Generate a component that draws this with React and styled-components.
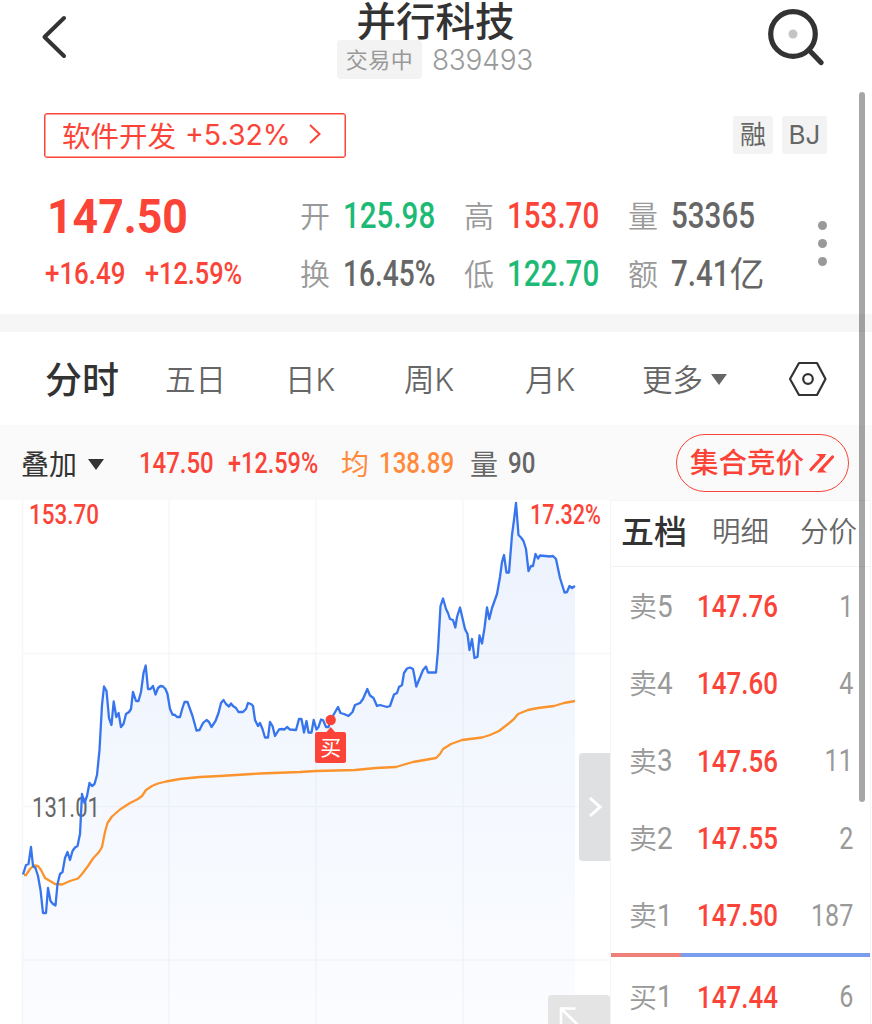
import React from "react";
import styled, { createGlobalStyle } from "styled-components";

const GlobalStyle = createGlobalStyle`
  * {
    box-sizing: border-box;
  }

  body {
    margin: 0;
    background: #fff;
    font-family: Inter, "Noto Sans CJK SC", sans-serif;
    color: #333;
  }
`;

const Page = styled.div`
  position: relative;
  display: flex;
  flex-direction: column;
  width: 872px;
  height: 1024px;
  overflow: hidden;
`;

const Header = styled.header`
  display: flex;
  justify-content: space-between;
  height: 92px;
  padding: 0 47px 0 41px;
`;

const BackIcon = styled.svg`
  width: 58px;
  height: 44px;
  margin-top: 15px;
`;

const SearchIcon = styled.svg`
  width: 58px;
  height: 58px;
  margin-top: 8px;
`;

const TitleBox = styled.div`
  display: flex;
  flex-direction: column;
  align-items: center;
  padding-left: 4px;
`;

const Title = styled.h1`
  height: 40px;
  margin: 0;
  padding-left: 1px;
  font-size: 39.5px;
  font-weight: 500;
  line-height: 44px;
`;

const Status = styled.div`
  display: flex;
  align-items: center;
  gap: 10px;
  color: #999;
`;

const StatusTag = styled.span`
  width: 85px;
  height: 39px;
  border-radius: 4px;
  background: #f3f3f3;
  font-size: 22px;
  line-height: 40px;
  letter-spacing: 0.5px;
  text-align: center;
`;

const Code = styled.span`
  font-size: 28px;
  font-weight: 300;
  letter-spacing: -0.2px;
`;

const TagRow = styled.div`
  display: flex;
  align-items: center;
  justify-content: space-between;
  height: 86px;
  padding: 0 45px 0 44px;
`;

const Sector = styled.div`
  display: flex;
  align-items: center;
  width: 302px;
  height: 45px;
  padding: 0 0 2px 17px;
  border: 1px solid #fb4437;
  border-radius: 3px;
  box-shadow: inset 0 0 0 0.5px #fb4437;
  color: #fb4437;
  font-size: 28.5px;

  svg {
    width: 14px;
    height: 22px;
    margin-left: 17px;
  }
`;

const SectorRate = styled.span`
  width: 106px;
  margin-left: 9px;
  letter-spacing: 0;
`;

const Badges = styled.div`
  display: flex;
  gap: 9px;
`;

const Badge = styled.span`
  width: ${props => props.$width}px;
  height: 38px;
  border-radius: 3px;
  background: #f3f3f3;
  color: #666;
  font-size: 26px;
  line-height: 38px;
  text-align: center;
`;

// condensed figures, drawn from whichever edge they are aligned to
const Num = styled.span`
  display: inline-block;
  font-family: Roboto, "Noto Sans CJK SC", sans-serif;
  font-size: ${props => props.$size || 32}px;
  font-weight: ${props => props.$weight || 500};
  color: ${props => props.$color || "#fb4437"};
  white-space: nowrap;
  transform: scaleX(${props => props.$squeeze || 0.81});
  transform-origin: ${props => (props.$right ? "right" : "left")} center;
`;

const Quote = styled.section`
  display: flex;
  height: 136px;
  padding: 8px 41px 0 44px;
`;

const Latest = styled.div`
  width: 256px;
  padding-top: 1px;
`;

const Price = styled.div`
  height: 58px;
  padding-left: 3px;
  line-height: 59px;
`;

const Change = styled.div`
  display: grid;
  grid-template-columns: 100px 1fr;
  height: 58px;
  padding-left: 1px;
  line-height: 57px;
`;

const Stats = styled.div`
  display: grid;
  grid-template-columns: 164px 164px 180px;
  grid-template-rows: 58px 58px;
  width: 508px;
`;

const Stat = styled.div`
  display: flex;
  align-items: center;
`;

const StatLabel = styled.span`
  width: 43px;
  flex: none;
  padding-bottom: 3px;
  color: #999;
  font-size: 30px;
  font-weight: 350;
`;

const StatUnit = styled.span`
  margin-left: -14px;
  padding-bottom: 4px;
  color: #666;
  font-size: 35px;
`;

const Dots = styled.div`
  display: flex;
  flex-direction: column;
  gap: 9px;
  padding-top: 35px;
  margin-left: 10px;

  i {
    width: 9px;
    height: 9px;
    border-radius: 50%;
    background: #999;
  }
`;

const Band = styled.div`
  height: 18px;
  background: #f6f6f6;
`;

const Tabs = styled.nav`
  display: grid;
  grid-template-columns: 120px 120px 119px 121px 117px 146px 40px;
  align-items: center;
  height: 93px;
  padding-left: 45px;
`;

const Tab = styled.span`
  display: flex;
  align-items: center;
  padding-bottom: 1px;
  color: ${props => (props.$active ? "#333" : "#666")};
  font-size: ${props => (props.$active ? 37 : 30.5)}px;
  font-weight: ${props => (props.$active ? 500 : 350)};
`;

const Caret = styled.i`
  margin: 3px 0 0 ${props => props.$gap}px;
  border: solid transparent;
  border-width: 11px 8px 0;
  border-top-color: ${props => props.$color};
`;

const InfoBar = styled.div`
  display: flex;
  align-items: center;
  height: 75px;
  padding-left: 21px;
  background: #fafafa;
  font-size: 28px;
`;

const Overlay = styled.div`
  display: flex;
  align-items: center;
  width: 118px;
`;

const InfoItem = styled.div`
  display: flex;
  align-items: center;
  width: ${props => props.$width}px;
  color: ${props => props.$color};
`;

const InfoLabel = styled.span`
  width: 38px;
  flex: none;
`;

const Auction = styled.div`
  display: flex;
  align-items: center;
  gap: 4px;
  width: 173px;
  height: 58px;
  padding-left: 13px;
  border: 1px solid #fb4437;
  border-radius: 29px;
  color: #fb4437;
  font-weight: 500;
  font-size: 28.5px;
  line-height: 57px;

  svg {
    width: 27px;
    height: 22px;
    flex: none;
  }
`;

const Body = styled.main`
  display: flex;
  height: 524px;
`;

const Chart = styled.svg`
  width: 610px;
  height: 524px;
  flex: none;
`;

const Book = styled.aside`
  width: 261px;
  border: solid #f4f4f4;
  border-width: 1px 1px 0;
`;

const BookTabs = styled.div`
  display: flex;
  align-items: center;
  height: 66px;
  padding: 0 0 8px 10px;
  border-bottom: 1px solid #f2f2f2;
`;

const BookTab = styled.span`
  width: ${props => props.$width}px;
  flex: none;
  color: ${props => (props.$active ? "#333" : "#666")};
  font-size: ${props => (props.$active ? 33 : 28.5)}px;
  font-weight: ${props => (props.$active ? 500 : 350)};
  white-space: nowrap;
`;

const Level = styled.div`
  display: grid;
  grid-template-columns: 28px 40px 1fr auto;
  align-items: center;
  height: 77.3px;
  padding: 1px 17px 0 18px;
  color: #999;
`;

const Side = styled.span`
  padding-bottom: 2px;
  font-size: 28px;
  font-weight: 350;
`;

const Ratio = styled.div`
  display: flex;
  height: 4px;
  background: #7a9ded;

  i {
    width: 70px;
    background: #ef8079;
  }
`;

const Scrollbar = styled.div`
  position: absolute;
  top: 92px;
  left: 858.5px;
  width: 6.5px;
  height: 710px;
  border-radius: 4px;
  background: rgba(0, 0, 0, 0.35);
`;

const RED = "#fb4437";
const GREEN = "#1dba75";
const GREY = "#666";

const stats = [
  { label: "开", value: "125.98", color: GREEN },
  { label: "高", value: "153.70", color: RED },
  { label: "量", value: "53365", color: GREY },
  { label: "换", value: "16.45%", color: GREY, squeeze: 0.77 },
  { label: "低", value: "122.70", color: GREEN },
  { label: "额", value: "7.41", unit: "亿", color: GREY }
];

const sells = [
  { side: "卖", level: 5, price: "147.76", qty: 1 },
  { side: "卖", level: 4, price: "147.60", qty: 4 },
  { side: "卖", level: 3, price: "147.56", qty: 11 },
  { side: "卖", level: 2, price: "147.55", qty: 2 },
  { side: "卖", level: 1, price: "147.50", qty: 187 }
];

const buys = [{ side: "买", level: 1, price: "147.44", qty: 6 }];

const pricePoints =
  "23,874.5 26,865 28.5,864 31,847 33,866 35.5,868 38,876 40.5,890 43,913 46,913 48,888 50.5,901 53,904 55.5,905.5 57.5,884 60,874 62.5,872 65,858 67.5,852 70,860 72.5,851 75,847.5 77.5,846 80,834 82,794 84.5,803 87,796 89.5,783 92,786 94.5,784 97,775 99.5,750 102,705 104,686.5 106.5,691 109,718 111.5,725 113.7,701.5 116.3,717 118.6,713 121,727 123.5,724 126,714 129,712 131,709 133,692 136,701 138.5,701 141,692 143.5,673 145.7,665.5 148,689 150.5,689 153,686 155.5,694.5 158,688 160.5,686 163,686.5 165.5,689 167.5,694 170,709 172.5,714.5 175,715 177,717 180,717 182.5,708 184.5,702 187.5,702 192.5,716 196.5,730.5 199.5,730 203,723 206.5,720 209,722 211.5,727 215.5,721 218.5,713 221,703 223.5,700 226,704 229,706.5 231,703.5 233,706 236,708 238.5,712 243,712 246,709 248,703 251,704 253,706 255,720 258,726 260,723 262.5,729 265,737.5 268,737.5 270,722 272.5,726 275,736 279,729.5 282,729 284.5,729.5 287,727 290,729.5 296,730 299,719 301.5,719 304,732.5 306.5,721 308.5,732.5 311.5,732.5 313.7,720 316.5,729.5 318.5,727 321,719.5 323,720 326,727 328.5,727 330.5,720 334,714 338,707 340.5,713 344,714 348.5,716 352.5,712 355,705 360,703 363,699 367.3,689 370,695.5 373.5,698 377,706 380,705 387,707 390,706 394,694.5 397,693 399,687 402,685 404,673 407,668.5 410,667.5 413,669 414,674 416.3,686.5 421,675 423,670 426,666.5 428,672.5 436,672.5 438,650 440.5,606 443,598.5 446,609 448,613 450,619 453,620 455.3,627.5 457,617 460,607.5 465,629 467.5,634 469.5,650 472,639 474.5,658 477.5,657 479.5,635.5 482,643.5 484.5,628 487,607.5 489.3,619 492,608 497,594 500,577 502,562 504,555 506.5,572.5 509,572.5 512,535 514,520 516,503 518.5,535 521,537.5 523.5,541 526,549 528.5,571 531,566 533,566 535.5,554 538,558.5 540,555.5 550,556.5 553,556 556,559 560,578 564.5,592.5 567,592 569.5,586 572,588 575,586";

const averagePoints =
  "24,875 26,875 30,869 34,865.5 38,866 41,870 45,878 50,881 55,884 62,884.5 70,881 78,878.5 82,874 88,866 93,858.5 99,852 102,847 105,832 107.5,823 112,816.5 120,809.5 130,803 138,799 142,796 146,790 152,786 158,783.5 166,781.5 180,779 200,777 220,776 260,773.5 300,772 316,771 355,770 376,768 396,767 401,765.5 413,762 436,758 440,754 443,749 451,744 462,740 482,737.5 490,735 499,731 508,724 514,719 518,714 528,710 538,708 554,706 564,703 575,701";

const ChartText = styled.text`
  font-family: Roboto, sans-serif;
  font-size: 27px;
  font-weight: ${props => props.$weight || 500};
  fill: ${props => props.$color};
`;

const IntradayChart = () => (
  <Chart viewBox="0 500 610 524">
    <defs>
      <linearGradient id="area" x1="0" y1="500" x2="0" y2="1024" gradientUnits="userSpaceOnUse">
        <stop offset="0" stopColor="#3b78f0" stopOpacity="0.1" />
        <stop offset="1" stopColor="#3b78f0" stopOpacity="0.02" />
      </linearGradient>
    </defs>
    <path
      d="M22.5 500V1024M169 500V1024M316 500V1024M463 500V1024M22 653.5H610M22 806.5H610M22 960H610"
      stroke="#f6f7f8"
      strokeWidth="1.5"
    />
    <polygon points={`22,1024 ${pricePoints} 575,1024`} fill="url(#area)" />
    <polyline
      points={averagePoints}
      fill="none"
      stroke="#fb942c"
      strokeWidth="2.3"
      strokeLinejoin="round"
    />
    <ChartText $color="#666" $weight={400} transform="translate(32 817) scale(.82 1)">
      131.01
    </ChartText>
    <polyline
      points={pricePoints}
      fill="none"
      stroke="#3775ee"
      strokeWidth="2.3"
      strokeLinejoin="round"
    />
    <ChartText $color={RED} transform="translate(29 524) scale(.83 1)">
      153.70
    </ChartText>
    <ChartText $color={RED} transform="translate(530 524) scale(.8 1)">
      17.32%
    </ChartText>
    <circle cx="330.7" cy="720" r="5.2" fill={RED} />
    <path d="M326.5 732L330.7 727L335 732Z" fill={RED} />
    <rect x="315" y="732" width="31" height="31" rx="2" fill={RED} />
    <text
      x="330.7"
      y="755"
      textAnchor="middle"
      fontSize="21"
      fontFamily="Noto Sans CJK SC, sans-serif"
      fill="#fff"
    >
      买
    </text>
    <path d="M610 753H583a4 4 0 0 0-4 4V857a4 4 0 0 0 4 4H610Z" fill="#dfe0e2" />
    <path d="M590 798L600 807L590 816" fill="none" stroke="#fff" strokeWidth="3" />
    <path d="M548 1024V999a4 4 0 0 1 4-4H606a4 4 0 0 1 4 4V1024Z" fill="#e4e4e5" />
    <path d="M561 1024V1008.5H575.5M561 1008.5L578 1025" fill="none" stroke="#fff" strokeWidth="2.6" />
  </Chart>
);

const LevelRow = ({ side, level, price, qty }) => (
  <Level>
    <Side>{side}</Side>
    <Num $size={31} $squeeze={0.9} $weight={450} $color="#999">
      {level}
    </Num>
    <Num $size={32}>{price}</Num>
    <Num $size={31} $weight={450} $color="#999" $right>
      {qty}
    </Num>
  </Level>
);

const App = () => {
  return (
    <Page>
      <GlobalStyle />
      <Header>
        <BackIcon viewBox="0 0 58 44">
          <path
            d="M23 3L3.5 22L23 41"
            fill="none"
            stroke="#333"
            strokeWidth="4"
            strokeLinecap="round"
            strokeLinejoin="round"
          />
        </BackIcon>
        <TitleBox>
          <Title>并行科技</Title>
          <Status>
            <StatusTag>交易中</StatusTag>
            <Code>839493</Code>
          </Status>
        </TitleBox>
        <SearchIcon viewBox="0 0 58 58">
          <circle cx="26" cy="26" r="22.3" fill="none" stroke="#333" strokeWidth="5.2" />
          <path d="M42 42L54 54.5" stroke="#333" strokeWidth="5.2" strokeLinecap="round" />
          <circle cx="26" cy="26" r="4.5" fill="#c4c4c4" />
        </SearchIcon>
      </Header>

      <TagRow>
        <Sector>
          <span>软件开发</span>
          <SectorRate>+5.32%</SectorRate>
          <svg viewBox="0 0 14 22">
            <path d="M2 2L11.5 11L2 20" fill="none" stroke="#fb4437" strokeWidth="2" />
          </svg>
        </Sector>
        <Badges>
          <Badge $width={40}>融</Badge>
          <Badge $width={45}>BJ</Badge>
        </Badges>
      </TagRow>

      <Quote>
        <Latest>
          <Price>
            <Num $size={49} $weight={700} $squeeze={0.91}>
              147.50
            </Num>
          </Price>
          <Change>
            <Num $size={32}>+16.49</Num>
            <Num $size={32} $squeeze={0.79}>
              +12.59%
            </Num>
          </Change>
        </Latest>
        <Stats>
          {stats.map(({ label, value, unit, color, squeeze }) => (
            <Stat key={label}>
              <StatLabel>{label}</StatLabel>
              <Num $size={36.5} $color={color} $squeeze={squeeze}>
                {value}
              </Num>
              {unit && <StatUnit>{unit}</StatUnit>}
            </Stat>
          ))}
        </Stats>
        <Dots>
          <i />
          <i />
          <i />
        </Dots>
      </Quote>

      <Band />

      <Tabs>
        <Tab $active>分时</Tab>
        <Tab>五日</Tab>
        <Tab>日K</Tab>
        <Tab>周K</Tab>
        <Tab>月K</Tab>
        <Tab>
          更多
          <Caret $gap={8} $color="#666" />
        </Tab>
        <svg width="40" height="36" viewBox="0 0 40 36">
          <path
            d="M11 2H29L37.5 18L29 34H11L2 18Z"
            fill="none"
            stroke="#333"
            strokeWidth="2.2"
            strokeLinejoin="round"
          />
          <circle cx="20" cy="18" r="4.8" fill="none" stroke="#333" strokeWidth="2.2" />
        </svg>
      </Tabs>

      <InfoBar>
        <Overlay>
          叠加
          <Caret $gap={11} $color="#333" />
        </Overlay>
        <InfoItem $width={89}>
          <Num $size={29} $squeeze={0.825}>
            147.50
          </Num>
        </InfoItem>
        <InfoItem $width={113}>
          <Num $size={29}>+12.59%</Num>
        </InfoItem>
        <InfoItem $width={129} $color="#ff8a3c">
          <InfoLabel>均</InfoLabel>
          <Num $size={29} $squeeze={0.83} $color="#ff8a3c">
            138.89
          </Num>
        </InfoItem>
        <InfoItem $width={206} $color="#666">
          <InfoLabel>量</InfoLabel>
          <Num $size={29} $squeeze={0.83} $color="#666">
            90
          </Num>
        </InfoItem>
        <Auction>
          集合竞价
          <svg viewBox="0 0 27 22">
            <path
              d="M3 17.5L15.5 4M12 18.5L24.5 5"
              stroke="#fb4437"
              strokeWidth="3.2"
              strokeLinecap="round"
            />
            <path d="M8 2H18.5L15 6H11.5V4.5ZM19 20.5H9L12.5 16H15.5V18Z" fill="#fb4437" />
          </svg>
        </Auction>
      </InfoBar>

      <Body>
        <IntradayChart />
        <Book>
          <BookTabs>
            <BookTab $active $width={91}>
              五档
            </BookTab>
            <BookTab $width={88}>明细</BookTab>
            <BookTab $width={60}>分价</BookTab>
          </BookTabs>
          {sells.map(row => (
            <LevelRow key={row.level} {...row} />
          ))}
          <Ratio>
            <i />
          </Ratio>
          {buys.map(row => (
            <LevelRow key={row.level} {...row} />
          ))}
        </Book>
      </Body>
      <Scrollbar />
    </Page>
  );
};

export default App;
